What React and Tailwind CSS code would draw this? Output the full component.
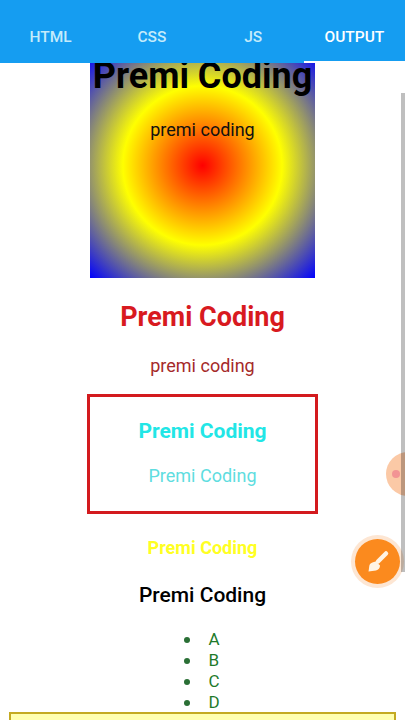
import React from "react";

const tabs = ["HTML", "CSS", "JS", "OUTPUT"];
const items = ["A", "B", "C", "D"];

export default function App() {
  return (
    <div className="relative h-[720px] w-[405px] overflow-hidden bg-white font-['Roboto',sans-serif]">
      <header className="relative z-10 grid h-[63px] grid-cols-4 bg-[#159df1] pt-[22px]">
        {tabs.map((t, i) => (
          <div key={t} className={`relative flex h-[41px] justify-center pt-[5px] text-[15.5px] font-medium leading-[20px] ${i === 3 ? "text-white" : "text-[#c4ebfb]"}`}>
            {t}
            {i === 3 && <span className="absolute bottom-0 left-0 h-[2px] w-full bg-white" />}
          </div>
        ))}
      </header>

      <main className="-mt-[10px] flex flex-col items-center text-center">
        <section className="h-[225px] w-[225px] bg-[radial-gradient(circle,#ff0000,#ffff00,#0000ff)]">
          <h1 className="mt-[1px] whitespace-nowrap text-[36px] font-bold leading-[44px] text-black">Premi Coding</h1>
          <p className="mt-[20px] text-[18px] leading-[24px] text-[#111]">premi coding</p>
        </section>
        <h2 className="mt-[23px] text-[27px] font-bold leading-[32px] text-[#d81a1f]">Premi Coding</h2>
        <p className="mt-[21px] text-[18px] leading-[24px] text-[#a52a2a]">premi coding</p>
        <section className="mt-[16px] flex h-[120px] w-[231px] flex-col items-center border-[3px] border-[#d31a1e]">
          <h3 className="mt-[20px] text-[21px] font-bold leading-[28px] text-[#22e6e6]">Premi Coding</h3>
          <p className="mt-[19px] text-[18px] leading-[24px] text-[#5fdde0]">Premi Coding</p>
        </section>
        <h4 className="mt-[22px] text-[18px] font-bold leading-[24px] text-[#ffff22]">Premi Coding</h4>
        <h4 className="mt-[22px] text-[21px] font-medium leading-[26px] text-black">Premi Coding</h4>
        <ul className="mt-[21px] flex w-[60px] flex-col text-left text-[17px] leading-[21px] text-[#1e7a2a]">
          {items.map((x) => (
            <li key={x} className="flex items-center">
              <span className="ml-[11px] mr-[19px] h-[6px] w-[6px] rounded-full bg-[#2a6f35]" />
              {x}
            </li>
          ))}
        </ul>
        <div className="-mt-[1px] h-[40px] w-[387px] shrink-0 border-2 border-[#c4aa22] bg-[#ffffb0]" />
      </main>

      <div className="absolute left-[386px] top-[452px] flex h-[44px] w-[44px] items-center rounded-full bg-[#fbc9a6] pl-[6px]">
        <span className="h-[8px] w-[8px] rounded-full bg-[#f29494]" />
      </div>
      <div className="absolute left-[351px] top-[535px] flex h-[53px] w-[53px] items-center justify-center rounded-full bg-[#fde6d3]">
        <div className="flex h-[45px] w-[45px] items-center justify-center rounded-full bg-[#fb8a1e]">
          <svg width="26" height="26" viewBox="0 0 26 26" fill="#fff4e4">
            <path d="M21 4.5 L13 12.5" fill="none" stroke="#fff4e4" strokeWidth="4.5" strokeLinecap="round" />
            <path d="M11 12.5 L15 16.5 C15 19 13.5 21 11 21.5 C8.5 22 6 22 3.5 22.5 C4 20 4 18 4.5 16 C5 14 8 13 11 12.5Z" />
          </svg>
        </div>
      </div>
      <div className="absolute right-0 top-[93px] h-[479px] w-[4px] bg-black/25" />
    </div>
  );
}
